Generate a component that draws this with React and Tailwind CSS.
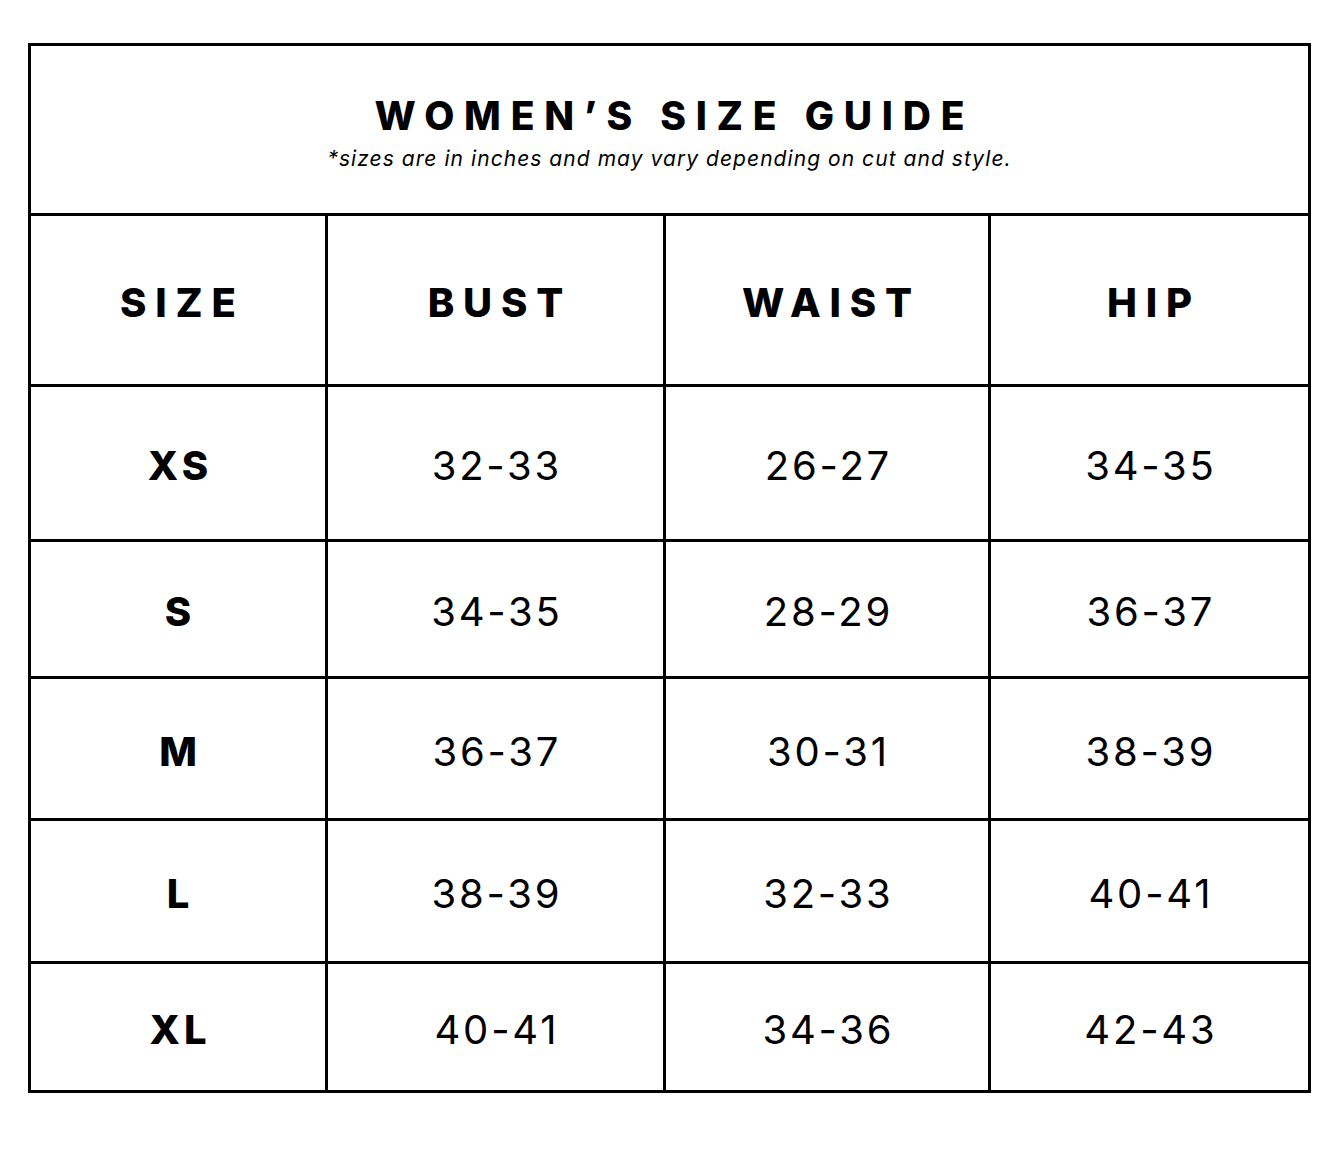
import React from 'react';

const rows = [
  { size: 'XS', bust: '32-33', waist: '26-27', hip: '34-35', h: 'h-[152px]' },
  { size: 'S', bust: '34-35', waist: '28-29', hip: '36-37', h: 'h-[134px]' },
  { size: 'M', bust: '36-37', waist: '30-31', hip: '38-39', h: 'h-[139px]' },
  { size: 'L', bust: '38-39', waist: '32-33', hip: '40-41', h: 'h-[140px]' },
  { size: 'XL', bust: '40-41', waist: '34-36', hip: '42-43', h: 'h-[126px]' },
];

const font = { fontFamily: 'Inter, "Noto Sans", sans-serif' };

const Cell = ({ children, className = '' }) => (
  <div className={`bg-white flex items-center justify-center text-black ${className}`}>{children}</div>
);

export default function App() {
  return (
    <div className="w-[1340px] h-[1171px] bg-white pt-[43px] pl-[28px]" style={font}>
      <div className="w-[1283px] bg-black p-[3px] grid grid-cols-[294px_335px_322px_317px] gap-[3px]">
        <div className="col-span-4 h-[167px] bg-white flex flex-col items-center justify-center pt-[6px]">
          <h1 className="text-[39px] leading-none font-extrabold tracking-[0.25em] pl-[0.25em] text-black">WOMEN’S SIZE GUIDE</h1>
          <p className="mt-[13px] text-[21px] leading-none italic tracking-[0.05em] text-black">*sizes are in inches and may vary depending on cut and style.</p>
        </div>

        {['SIZE', 'BUST', 'WAIST', 'HIP'].map((t) => (
          <Cell key={t} className="h-[168px] pt-[6px]">
            <span className="text-[40px] leading-none font-extrabold tracking-[0.22em] pl-[0.22em]">{t}</span>
          </Cell>
        ))}

        {rows.map((r) => (
          <React.Fragment key={r.size}>
            <Cell className={`${r.h} pt-[6px]`}>
              <span className="text-[40px] leading-none font-extrabold tracking-[0.1em] pl-[0.1em]">{r.size}</span>
            </Cell>
            {[r.bust, r.waist, r.hip].map((v, i) => (
              <Cell key={i} className={`${r.h} pt-[6px]`}>
                <span className="text-[40px] leading-none font-normal tracking-[0.07em] pl-[0.07em]">{v}</span>
              </Cell>
            ))}
          </React.Fragment>
        ))}
      </div>
    </div>
  );
}
